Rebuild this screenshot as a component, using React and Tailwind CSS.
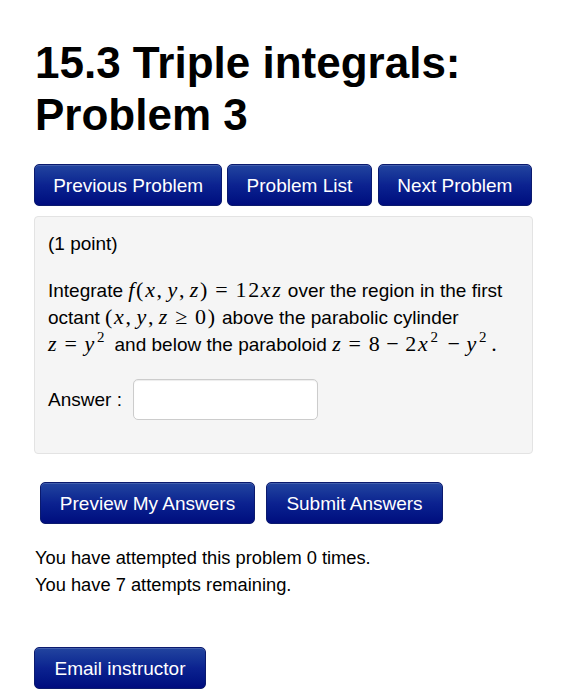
import React from "react";

const btn =
  "inline-flex items-center justify-center h-[42px] rounded-[5px] border border-[#0b1a6e] bg-gradient-to-b from-[#23449f] via-[#0c2290] to-[#000c7e] text-white text-[19px] leading-none shadow-[inset_0_1px_0_rgba(255,255,255,0.15)]";

const M = ({ children }) => (
  <span className="font-['Liberation_Serif',serif] text-[22px] leading-none tracking-[1.7px] whitespace-nowrap">
    {children}
  </span>
);
const V = ({ children }) => <i className="italic">{children}</i>;
const Sup = () => (
  <span className="relative -top-[9px] text-[15px] leading-none ml-[1px] mr-[3px]">2</span>
);
const Rel = ({ children }) => <span className="mx-[0.278em]">{children}</span>;
const Bin = ({ children }) => <span className="mx-[0.222em]">{children}</span>;
const C = () => <span className="mr-[0.167em]">,</span>;

export default function App() {
  return (
    <div className="min-h-[700px] bg-white px-[34px] text-black font-['Liberation_Sans',Arial,sans-serif]">
      <h1 className="pt-[37px] pl-[1px] text-[44px] leading-[52px] font-bold">
        15.3 Triple integrals:
        <br />
        Problem 3
      </h1>

      <div className="mt-[23px] flex gap-[5px]">
        <button className={btn + " w-[189px]"}>Previous Problem</button>
        <button className={btn + " w-[145px]"}>Problem List</button>
        <button className={btn + " w-[155px] ml-[1px]"}>Next Problem</button>
      </div>

      <div className="mt-[10px] w-[499px] rounded-[4px] border border-[#e3e3e3] bg-[#f5f5f5] px-[13px] pt-[13px] pb-[33px] text-[19px] leading-[27px]">
        <p>(1 point)</p>
        <p className="mt-[20px] whitespace-nowrap">
          Integrate{" "}
          <M>
            <V>f</V>(<V>x</V>
            <C />
            <V>y</V>
            <C />
            <V>z</V>)<Rel>=</Rel>12<V>xz</V>
          </M>{" "}
          over the region in the first
          <br />
          octant{" "}
          <M>
            (<V>x</V>
            <C />
            <V>y</V>
            <C />
            <V>z</V>
            <Rel>≥</Rel>0)
          </M>{" "}
          above the parabolic cylinder
          <br />
          <M>
            <V>z</V>
            <Rel>=</Rel>
            <V>y</V>
            <Sup />
          </M>{" "}
          and below the paraboloid{" "}
          <M>
            <V>z</V>
            <Rel>=</Rel>8<Bin>−</Bin>2<V>x</V>
            <Sup />
            <Bin>−</Bin>
            <V>y</V>
            <Sup />.
          </M>
        </p>
        <div className="mt-[21px] flex items-center">
          <span>Answer :</span>
          <input
            type="text"
            className="ml-[11px] h-[41px] w-[185px] rounded-[5px] border border-[#cccccc] bg-white shadow-[inset_0_1px_1px_rgba(0,0,0,0.075)] outline-none"
          />
        </div>
      </div>

      <div className="mt-[28px] ml-[6px] flex gap-[11px]">
        <button className={btn + " w-[215px]"}>Preview My Answers</button>
        <button className={btn + " w-[177px]"}>Submit Answers</button>
      </div>

      <div className="mt-[20px] pl-[1px] text-[18.3px] leading-[27px]">
        <p>You have attempted this problem 0 times.</p>
        <p>You have 7 attempts remaining.</p>
      </div>

      <div className="mt-[49px]">
        <button className={btn + " w-[172px] h-[40px]"}>Email instructor</button>
      </div>
    </div>
  );
}
